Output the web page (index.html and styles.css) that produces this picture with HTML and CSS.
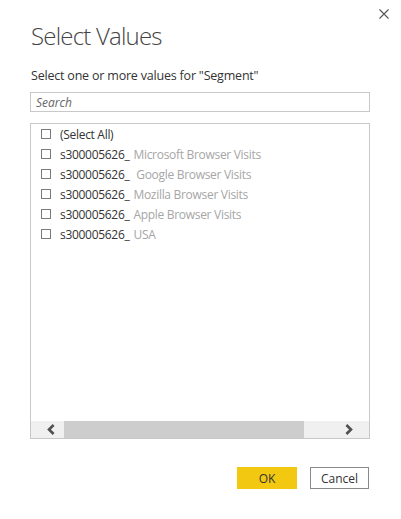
FILE: index.html
```html
<!DOCTYPE html>
<html lang="en">
<head>
  <meta charset="UTF-8">
  <meta name="viewport" content="width=device-width, initial-scale=1.0">
  <title>Select Values</title>
  <link rel="stylesheet" href="styles.css">
</head>
<body>
  <div class="dialog">
    <button class="close" aria-label="Close">
      <svg width="10" height="10" viewBox="0 0 10 10">
        <path d="M0.5 0.5 L9.5 9.5 M9.5 0.5 L0.5 9.5" stroke="#555" stroke-width="1.1" fill="none"/>
      </svg>
    </button>

    <h1>Select Values</h1>
    <p class="hint">Select one or more values for "Segment"</p>

    <input class="search" type="text" placeholder="Search">

    <div class="list">
      <div class="rows">
        <label class="row"><span class="box"></span><span class="key">(Select All)</span></label>
        <label class="row"><span class="box"></span><span class="key">s300005626_</span><span class="val">Microsoft Browser Visits</span></label>
        <label class="row"><span class="box"></span><span class="key">s300005626_</span><span class="val">&nbsp;Google Browser Visits</span></label>
        <label class="row"><span class="box"></span><span class="key">s300005626_</span><span class="val">Mozilla Browser Visits</span></label>
        <label class="row"><span class="box"></span><span class="key">s300005626_</span><span class="val">Apple Browser Visits</span></label>
        <label class="row"><span class="box"></span><span class="key">s300005626_</span><span class="val">USA</span></label>
      </div>

      <!-- horizontal scrollbar -->
      <div class="hscroll">
        <span class="arrow left">
          <svg width="8" height="11" viewBox="0 0 8 11"><path d="M6.6 1 L2 5.5 L6.6 10" stroke="#505050" stroke-width="2.6" fill="none"/></svg>
        </span>
        <span class="thumb"></span>
        <span class="arrow right">
          <svg width="8" height="11" viewBox="0 0 8 11"><path d="M1.4 1 L6 5.5 L1.4 10" stroke="#505050" stroke-width="2.6" fill="none"/></svg>
        </span>
      </div>
    </div>

    <div class="actions">
      <button class="btn ok">OK</button>
      <button class="btn cancel">Cancel</button>
    </div>
  </div>
</body>
</html>
```

FILE: styles.css
```css
body {
  margin: 0;
  background-color: #fff;
  font-family: "Open Sans", "Liberation Sans", sans-serif;
  color: #333;
}
.dialog {
  position: relative;
  padding: 20px 31px 0 30px;
  height: 519px;
  box-sizing: border-box;
}
.close {
  position: absolute;
  top: 9px;
  right: 12px;
  padding: 0;
  border: none;
  background: none;
  line-height: 0;
  cursor: pointer;
}
.dialog h1 {
  margin: 0 0 0 1px;
  font-size: 24px;
  font-weight: 300;
  line-height: 32px;
  letter-spacing: -0.8px;
  color: #444;
}
.hint {
  margin: 15px 0 0 1px;
  font-size: 12.5px;
  line-height: 18px;
  letter-spacing: -0.2px;
  color: #333;
}
.search {
  display: block;
  width: 100%;
  height: 20px;
  margin-top: 7px;
  padding: 0 5px;
  box-sizing: border-box;
  border: 1px solid #c8c8c8;
  font-family: inherit;
  font-size: 12px;
  font-style: italic;
}
.search::placeholder {
  color: #666;
}
.list {
  display: flex;
  flex-direction: column;
  height: 316px;
  margin-top: 11px;
  box-sizing: border-box;
  border: 1px solid #c8c8c8;
}
.rows {
  flex: 1;
}
.row {
  display: flex;
  align-items: center;
  height: 20px;
  padding-left: 10px;
  font-size: 12px;
  letter-spacing: -0.3px;
  white-space: nowrap;
}
.box {
  width: 10px;
  height: 10px;
  margin-right: 9px;
  box-sizing: border-box;
  border: 1.5px solid #7a7a7a;
}
.key {
  color: #333;
}
.val {
  margin-left: 4px;
  color: #a6a6a6;
}
.hscroll {
  display: flex;
  align-items: center;
  height: 17px;
  background-color: #f0f0f0;
}
.arrow {
  display: flex;
  align-items: center;
  height: 100%;
}
.arrow.left {
  width: 33px;
  padding-left: 16px;
  box-sizing: border-box;
}
.arrow.right {
  flex: 1;
  justify-content: flex-end;
  padding-right: 16px;
}
.thumb {
  width: 240px;
  height: 17px;
  background-color: #cdcdcd;
}
.actions {
  display: flex;
  justify-content: flex-end;
  gap: 13px;
  margin-top: 28px;
  padding-right: 1px;
}
.btn {
  height: 22px;
  padding: 0;
  font-family: inherit;
  font-size: 12px;
  color: #333;
  cursor: pointer;
}
.ok {
  width: 60px;
  border: none;
  background-color: #f2c811;
}
.cancel {
  width: 59px;
  border: 1px solid #8a8a8a;
  background-color: #fff;
}
```
